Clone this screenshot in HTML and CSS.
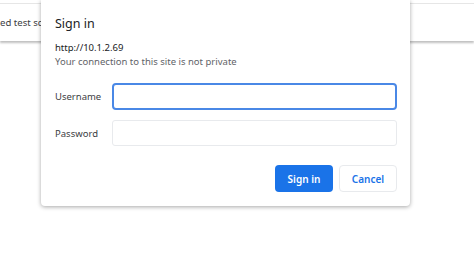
FILE: index.html
```html
<!DOCTYPE html>
<html>
<head>
<meta charset="utf-8">
<link rel="stylesheet" href="styles.css">
</head>
<body>
<div class="bar"><span class="bar-text">ed test sc</span></div>
<div class="dialog">
  <div class="title">Sign in</div>
  <div class="origin">http://10.1.2.69</div>
  <div class="note">Your connection to this site is not private</div>
  <div class="row row-user">
    <label class="label">Username</label>
    <div class="input input-focus"></div>
  </div>
  <div class="row row-pass">
    <label class="label">Password</label>
    <div class="input"></div>
  </div>
  <div class="actions">
    <button class="btn btn-primary">Sign in</button>
    <button class="btn btn-secondary">Cancel</button>
  </div>
</div>
</body>
</html>
```
FILE: styles.css
```css
html, body {
  margin: 0;
  padding: 0;
  background: #ffffff;
  width: 474px;
  height: 255px;
  overflow: hidden;
  font-family: "Noto Sans", "Open Sans", sans-serif;
  color: #202124;
}
.bar {
  margin-top: 3px;
  height: 37px;
  border-top: 1px solid #e6e6e6;
  box-shadow: 0 2px 2px rgba(0,0,0,0.25);
  background: #fff;
  display: flex;
  align-items: center;
}
.bar-text {
  display: block;
  font-size: 9.6px;
  color: #3c4043;
  white-space: nowrap;
}
.dialog {
  position: absolute;
  left: 41px;
  top: 0;
  width: 369px;
  height: 206px;
  background: #fff;
  border-radius: 0 0 4px 4px;
  box-shadow: 0 1px 4px rgba(0,0,0,0.35);
  box-sizing: border-box;
  padding: 16px 13px 0 14px;
}
.title {
  font-size: 12.5px;
  line-height: 16px;
  color: #202124;
}
.origin {
  margin-top: 9px;
  font-size: 9.5px;
  line-height: 14px;
  color: #202124;
}
.note {
  font-size: 9.5px;
  line-height: 14px;
  color: #5f6368;
}
.row {
  display: flex;
  align-items: center;
}
.row-user { margin-top: 14px; }
.row-pass { margin-top: 10px; }
.label {
  width: 57px;
  font-size: 9.5px;
  color: #3c4043;
}
.input {
  flex: 1;
  height: 26px;
  border: 1px solid #e8eaed;
  border-radius: 3px;
  box-sizing: border-box;
}
.input-focus {
  height: 27px;
  border: 2px solid #4a88e6;
  border-radius: 4px;
}
.actions {
  display: flex;
  justify-content: flex-end;
  gap: 6px;
  margin-top: 19px;
}
.btn {
  width: 58px;
  height: 27px;
  border-radius: 4px;
  font-family: "Noto Sans", "Open Sans", sans-serif;
  font-size: 10px;
  font-weight: 600;
  padding: 0;
  box-sizing: border-box;
}
.btn-primary {
  background: #1a73e8;
  color: #fff;
  border: none;
}
.btn-secondary {
  background: #fff;
  color: #1a73e8;
  border: 1px solid #e8eaed;
}
```
